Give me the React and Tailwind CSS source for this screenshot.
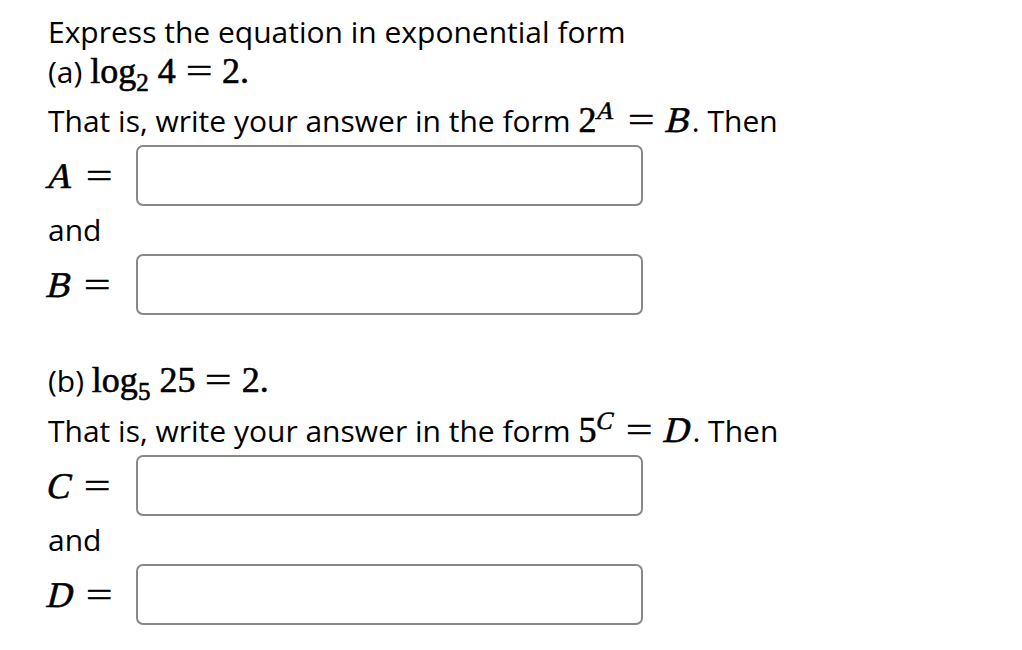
import React from 'react';

const serif = "font-['Liberation_Serif',serif]";

function M({ children, className = '' }) {
  return (
    <span className={`${serif} text-[36px] leading-none [-webkit-text-stroke:0.6px_black] ${className}`}>
      {children}
    </span>
  );
}

// math variable, slanted
function V({ children, className = '' }) {
  return <span className={`inline-block not-italic -skew-x-[14deg] ${className}`}>{children}</span>;
}

function Eq({ className = 'ml-[15px] mr-[16px]' }) {
  return <span className={`inline-block scale-x-[1.3] ${className}`}>=</span>;
}

function AnswerRow({ label, className = '' }) {
  return (
    <div className={`flex items-center ${className}`}>
      <div className="w-[88px] shrink-0 flex items-center">
        <M><V className="pr-[3px]">{label}</V></M>
        <M className="ml-[12px] inline-block scale-x-[1.3]">=</M>
      </div>
      <input
        type="text"
        className="w-[507px] h-[61px] border-2 border-[#888888] rounded-[7px] bg-white outline-none"
      />
    </div>
  );
}

export default function App() {
  return (
    <div className="min-h-screen bg-white text-black font-['Open_Sans',sans-serif] text-[30px] leading-[40px] pl-[48px] pt-[12px]">
      <p className="h-[40px]">Express the equation in exponential form</p>
      <p className="h-[40px]">
        (a){' '}
        <M>
          log<span className="relative top-[8px] text-[25px]">2</span> 4<Eq className="mx-[13px]" />2.
        </M>
      </p>
      <p className="h-[40px] mt-[9px]">
        That is, write your answer in the form{' '}
        <M>
          2<span className="relative -top-[13px] text-[25px] pl-[1px]"><V>A</V></span>
          <Eq />
          <V className="pr-[1px]">B</V>
        </M>
        . Then
      </p>
      <AnswerRow label="A" className="mt-[4px]" />
      <p className="h-[40px] mt-[4px]">and</p>
      <AnswerRow label="B" className="mt-[4px]" />

      <p className="h-[40px] mt-[46px]">
        (b){' '}
        <M>
          log<span className="relative top-[8px] text-[25px]">5</span> 25<Eq className="mx-[13px]" />2.
        </M>
      </p>
      <p className="h-[40px] mt-[10px]">
        That is, write your answer in the form{' '}
        <M>
          5<span className="relative -top-[13px] text-[25px] pl-[1px]"><V>C</V></span>
          <Eq />
          <V className="pr-[1px]">D</V>
        </M>
        . Then
      </p>
      <AnswerRow label="C" className="mt-[4px]" />
      <p className="h-[40px] mt-[4px]">and</p>
      <AnswerRow label="D" className="mt-[4px]" />
    </div>
  );
}
